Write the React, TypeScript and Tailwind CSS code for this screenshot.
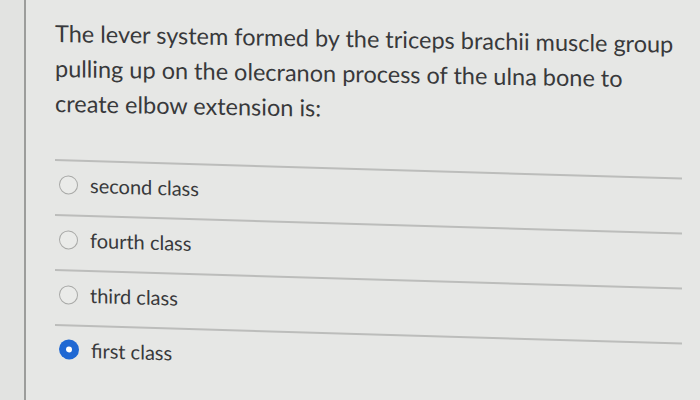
const options = [
  { label: 'second class', checked: false },
  { label: 'fourth class', checked: false },
  { label: 'third class', checked: false },
  { label: 'first class', checked: true },
];

function Radio({ checked }: { checked: boolean }) {
  if (checked) {
    return (
      <span className="flex h-[20px] w-[20px] items-center justify-center rounded-full bg-[#1f68d3]">
        <span className="h-[6px] w-[6px] rounded-full bg-white" />
      </span>
    );
  }
  return <span className="h-[19px] w-[19px] rounded-full border-[1.5px] border-[#a8a9a7] bg-[#eaebe9]" />;
}

export default function App() {
  return (
    <div className="flex h-[400px] w-[700px] overflow-hidden bg-[#e6e7e5] font-[Lato,sans-serif] text-[#38393b]">
      <div className="w-[26px] shrink-0 border-r-2 border-[#9c9d9b] bg-[#e2e3e1]" />
      <div className="flex-1 pr-[18px] pl-[29px]">
        <p className="origin-top-left skew-y-[1deg] pt-[16px] text-[23.5px] leading-[35px]">
          The lever system formed by the triceps brachii muscle group
          <br />
          pulling up on the olecranon process of the ulna bone to
          <br />
          create elbow extension is:
        </p>
        <div className="mt-[38px] origin-top-left skew-y-[1.7deg]">
          {options.map((o) => (
            <div key={o.label} className="flex h-[55px] items-center gap-[12px] border-t-2 border-[#bcbdbb] pb-[7px] pl-[4px]">
              <Radio checked={o.checked} />
              <span className="text-[20px]">{o.label}</span>
            </div>
          ))}
        </div>
      </div>
    </div>
  );
}
